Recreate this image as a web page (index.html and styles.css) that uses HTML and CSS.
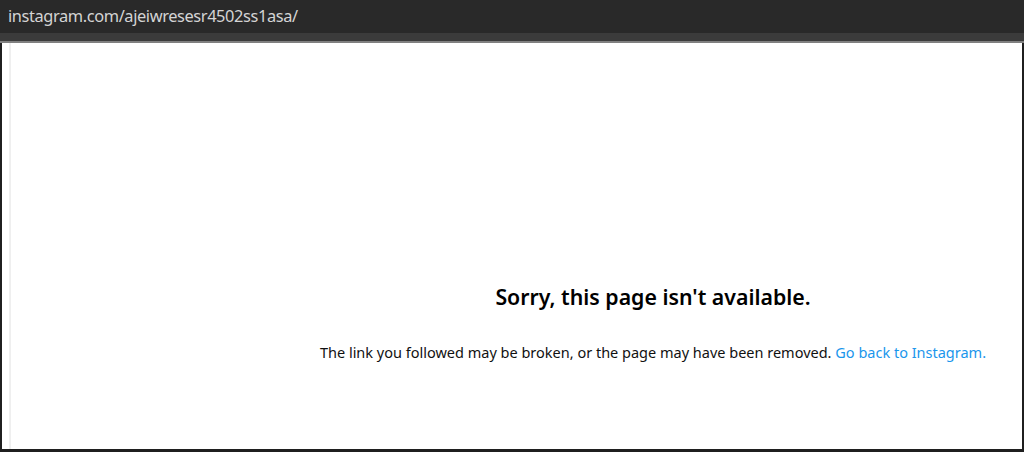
FILE: index.html
```html
<!DOCTYPE html>
<html lang="en">
<head>
<meta charset="utf-8">
<title>Page not found • Instagram</title>
<link rel="stylesheet" href="styles.css">
</head>
<body>
<div class="chrome">
  <div class="addressbar"><span class="url">instagram.com/ajeiwresesr4502ss1asa/</span></div>
  <div class="tabband"></div>
</div>
<div class="viewport">
  <div class="page">
    <div class="sidebar"></div>
    <main class="main">
      <h2 class="title">Sorry, this page isn't available.</h2>
      <p class="message">The link you followed may be broken, or the page may have been removed. <a class="link" href="#">Go back to Instagram.</a></p>
    </main>
  </div>
</div>
</body>
</html>
```

FILE: styles.css
```css
html, body {
  margin: 0;
  padding: 0;
  height: 100%;
}
body {
  background: #1f1f1f;
  display: flex;
  flex-direction: column;
  font-family: "Noto Sans", "Open Sans", sans-serif;
  overflow: hidden;
}
.chrome {
  flex: none;
}
.addressbar {
  height: 33px;
  background: #292929;
  display: flex;
  align-items: center;
  padding-left: 8px;
}
.url {
  color: #d4d4d4;
  font-size: 16.4px;
  letter-spacing: -0.4px;
  line-height: 1;
  margin-top: 0;
}
.tabband {
  height: 8px;
  background: #3b3b3b;
  border-bottom: 2px solid #808080;
}
.viewport {
  flex: 1;
  margin: 0 2px 3px 2px;
  background: #ffffff;
  padding-left: 7px;
  display: flex;
}
.page {
  flex: 1;
  border-left: 2px solid #efefef;
  display: flex;
}
.sidebar {
  width: 273px;
  flex: none;
}
.main {
  flex: 1;
  display: flex;
  flex-direction: column;
  align-items: center;
  padding-top: 240px;
}
.title {
  margin: 0;
  font-size: 21.3px;
  font-weight: 600;
  color: #000000;
  line-height: 28px;
}
.message {
  margin: 32px 0 0 0;
  font-size: 14.5px;
  color: #111111;
  line-height: 18px;
}
.link {
  color: #1a96ec;
  text-decoration: none;
}
```
